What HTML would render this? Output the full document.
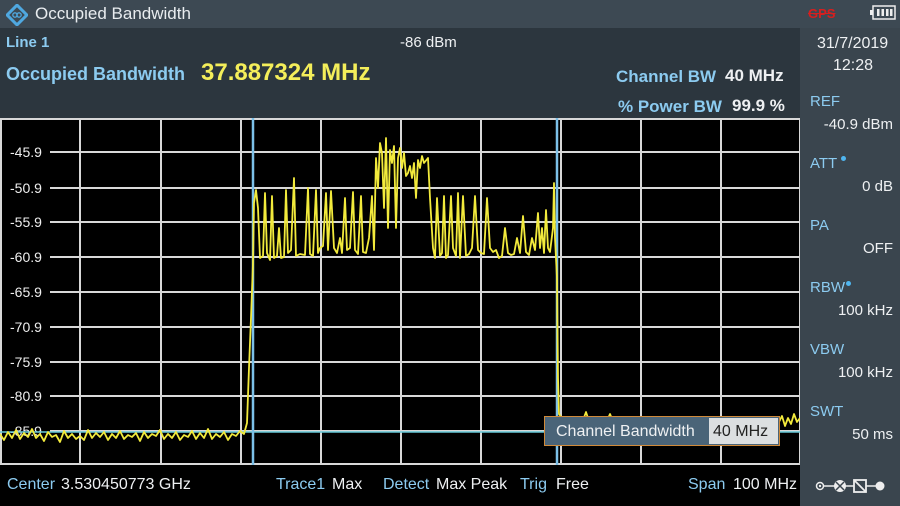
<!DOCTYPE html>
<html><head><meta charset="utf-8"><style>
body{margin:0;width:900px;height:506px;overflow:hidden;background:#000;font-family:"Liberation Sans",sans-serif;position:relative}
div{position:absolute;white-space:nowrap}
.t{top:0;left:0;width:900px;height:28px;background:#3d4953}
.h{top:28px;left:0;width:800px;height:90px;background:#2c363e}
.r{top:28px;left:800px;width:100px;height:478px;background:#3a454e}
.b{color:#8ccbf0}
.w{color:#eef0f2}
.lab{font-size:15px;color:#8ccbf0;left:810px}
.val{font-size:15px;color:#eef0f2;right:7px}
.dot{width:5px;height:5px;border-radius:50%;background:#4fb6f0}
.ft{font-size:16px;top:476px}
</style></head><body>
<div class="t"></div>
<div class="h"></div>
<div class="r"></div>
<svg style="position:absolute;left:6px;top:4px" width="22" height="22" viewBox="0 0 22 22"><rect x="4" y="4" width="14" height="14" transform="rotate(45 11 11)" fill="none" stroke="#4fa8e0" stroke-width="3"/><circle cx="9" cy="11" r="2.2" fill="none" stroke="#4fa8e0" stroke-width="1.3"/><circle cx="13" cy="11" r="2.2" fill="none" stroke="#4fa8e0" stroke-width="1.3"/></svg>
<div class="w" style="left:35px;top:4px;font-size:17px;color:#e8ecef">Occupied Bandwidth</div>
<div style="left:808px;top:6px;font-size:13px;font-weight:bold;color:#d81e1e;text-decoration:line-through">GPS</div>
<svg style="position:absolute;left:870px;top:5px" width="26" height="16"><rect x="3" y="1" width="22" height="13" fill="none" stroke="#eee" stroke-width="1.5"/><rect x="0" y="5" width="3" height="5" fill="#eee"/><rect x="7" y="4" width="2.5" height="7" fill="#eee"/><rect x="11.5" y="4" width="2.5" height="7" fill="#eee"/><rect x="16" y="4" width="2.5" height="7" fill="#eee"/><rect x="20" y="4" width="2.5" height="7" fill="#eee"/></svg>
<div class="b" style="left:6px;top:34px;font-size:15px;font-weight:bold">Line 1</div>
<div class="w" style="left:400px;top:34px;font-size:15px">-86 dBm</div>
<div class="b" style="left:6px;top:64px;font-size:18px;font-weight:bold">Occupied Bandwidth</div>
<div style="left:201px;top:59px;font-size:24px;font-weight:bold;color:#f4ee5a">37.887324 MHz</div>
<div class="b" style="left:616px;top:67px;font-size:17px;font-weight:bold">Channel BW</div>
<div class="w" style="left:725px;top:66px;font-size:17px;font-weight:bold">40 MHz</div>
<div class="b" style="left:618px;top:97px;font-size:17px;font-weight:bold">% Power BW</div>
<div class="w" style="left:732px;top:96px;font-size:17px;font-weight:bold">99.9 %</div>
<div class="w" style="left:817px;top:35px;font-size:16px">31/7/2019</div>
<div class="w" style="left:833px;top:57px;font-size:16px">12:28</div>
<div class="lab" style="top:93px">REF</div><div class="val" style="top:116px">-40.9 dBm</div>
<div class="lab" style="top:155px">ATT</div><div class="dot" style="left:841px;top:156px"></div><div class="val" style="top:178px">0 dB</div>
<div class="lab" style="top:217px">PA</div><div class="val" style="top:240px">OFF</div>
<div class="lab" style="top:279px">RBW</div><div class="dot" style="left:846px;top:281px"></div><div class="val" style="top:302px">100 kHz</div>
<div class="lab" style="top:341px">VBW</div><div class="val" style="top:364px">100 kHz</div>
<div class="lab" style="top:403px">SWT</div><div class="val" style="top:426px">50 ms</div>
<svg style="position:absolute;left:815px;top:477px" width="72" height="18"><line x1="5" y1="9" x2="66" y2="9" stroke="#eee" stroke-width="1.5"/><circle cx="5" cy="9" r="3.5" fill="#3a454e" stroke="#eee" stroke-width="1.5"/><circle cx="5" cy="9" r="1.2" fill="#eee"/><circle cx="25" cy="9" r="6" fill="#eee"/><path d="M21 5l8 8M29 5l-8 8" stroke="#3a454e" stroke-width="1.5"/><rect x="39" y="3" width="12" height="12" fill="#3a454e" stroke="#eee" stroke-width="1.8"/><line x1="39" y1="3" x2="51" y2="15" stroke="#eee" stroke-width="1.8"/><circle cx="65" cy="9" r="4.5" fill="#eee"/></svg>
<svg style="position:absolute;left:0;top:118px" width="800" height="347">
<rect x="0" y="0" width="800" height="347" fill="#000"/>
<g stroke="#d8d8d8" stroke-width="2">
<line x1="80" y1="0" x2="80" y2="347"/><line x1="161" y1="0" x2="161" y2="347"/><line x1="241" y1="0" x2="241" y2="347"/><line x1="321" y1="0" x2="321" y2="347"/><line x1="401" y1="0" x2="401" y2="347"/><line x1="481" y1="0" x2="481" y2="347"/><line x1="561" y1="0" x2="561" y2="347"/><line x1="641" y1="0" x2="641" y2="347"/><line x1="721" y1="0" x2="721" y2="347"/>
<line x1="50" y1="34" x2="800" y2="34"/><line x1="50" y1="70" x2="800" y2="70"/><line x1="50" y1="104" x2="800" y2="104"/><line x1="50" y1="139" x2="800" y2="139"/><line x1="50" y1="174" x2="800" y2="174"/><line x1="50" y1="209" x2="800" y2="209"/><line x1="50" y1="244" x2="800" y2="244"/><line x1="50" y1="278" x2="800" y2="278"/><line x1="50" y1="313" x2="800" y2="313"/>
</g>
<rect x="1" y="1" width="799" height="345" fill="none" stroke="#d8d8d8" stroke-width="2"/>
<g font-size="14" fill="#eee" font-family="Liberation Sans">
<text x="10" y="39">-45.9</text><text x="10" y="75">-50.9</text><text x="10" y="109">-55.9</text><text x="10" y="144">-60.9</text><text x="10" y="179">-65.9</text><text x="10" y="214">-70.9</text><text x="10" y="249">-75.9</text><text x="10" y="283">-80.9</text><text x="10" y="318">-85.9</text>
</g>
<line x1="0" y1="314" x2="800" y2="314" stroke="#66c8d8" stroke-width="1.5"/>
<line x1="253" y1="0" x2="253" y2="347" stroke="#7cc0e8" stroke-width="2.5"/>
<line x1="557" y1="0" x2="557" y2="347" stroke="#7cc0e8" stroke-width="2.5"/>
<polyline fill="none" stroke="#f2ea3c" stroke-width="1.8" stroke-linejoin="round" points="0,316 4,322 8,314 12,320 16,312 20,321 24,315 28,319 32,311 36,320 40,316 44,323 48,314 52,319 56,317 60,324 64,313 68,320 72,316 76,321 80,318 84,322 88,312 92,320 96,315 100,319 104,314 108,322 112,316 116,320 120,313 124,321 128,317 132,319 136,315 140,323 144,314 148,320 152,316 156,318 160,312 164,321 168,316 172,320 176,314 180,322 184,317 188,319 192,313 196,321 200,315 204,320 208,311 212,321 216,316 220,319 224,314 228,322 232,316 236,318 240,313 244,316 247,305 249,250 251,200 253,145 254,85 256,72 258,90 260,140 263,138 265,75 267,135 270,142 272,78 274,140 277,138 279,110 281,140 284,139 286,72 288,135 291,132 294,60 296,138 300,136 305,137 308,70 310,136 313,138 316,72 318,135 320,130 323,128 326,75 328,132 331,73 334,130 337,135 340,120 342,135 345,80 347,132 350,130 353,74 355,132 358,136 361,78 363,134 366,135 369,120 372,78 374,132 376,40 378,70 380,25 382,35 384,90 386,20 388,110 390,32 392,45 394,28 396,110 398,40 400,30 402,50 404,35 406,58 408,55 410,48 412,60 414,45 416,80 418,42 420,50 422,38 424,45 428,40 430,80 433,130 435,140 437,80 440,138 442,135 444,78 446,140 448,137 451,78 453,130 456,138 458,75 460,140 463,78 466,138 469,136 472,130 475,78 478,132 481,135 484,136 487,80 490,130 493,134 496,132 499,140 502,138 505,110 508,135 511,137 514,136 517,120 520,135 523,98 526,134 529,137 532,120 535,132 538,95 540,130 542,110 544,135 546,92 548,130 550,134 553,110 554,65 555,120 557,160 558,260 559,296 562,300 566,306 570,302 574,308 578,300 582,305 586,294 590,306 594,302 598,308 602,301 606,305 610,296 614,306 618,302 622,307 626,300 630,305 640,302 660,306 700,303 740,305 778,306 782,298 785,308 788,300 791,306 794,296 797,304 800,300"/>
</svg>
<div style="left:544px;top:416px;width:234px;height:28px;border:1.5px solid #d08a3a;background:#4a6478"></div>
<div style="left:709px;top:418px;width:69px;height:26px;background:#dcdfe1"></div>
<div style="left:556px;top:423px;font-size:16px;color:#eef0f2">Channel Bandwidth</div>
<div style="left:713px;top:423px;font-size:16px;color:#222">40 MHz</div>
<div class="ft b" style="left:7px">Center</div><div class="ft w" style="left:61px">3.530450773 GHz</div>
<div class="ft b" style="left:276px">Trace1</div><div class="ft w" style="left:332px">Max</div>
<div class="ft b" style="left:383px">Detect</div><div class="ft w" style="left:436px">Max Peak</div>
<div class="ft b" style="left:520px">Trig</div><div class="ft w" style="left:556px">Free</div>
<div class="ft b" style="left:688px">Span</div><div class="ft w" style="left:733px">100 MHz</div>
</body></html>
